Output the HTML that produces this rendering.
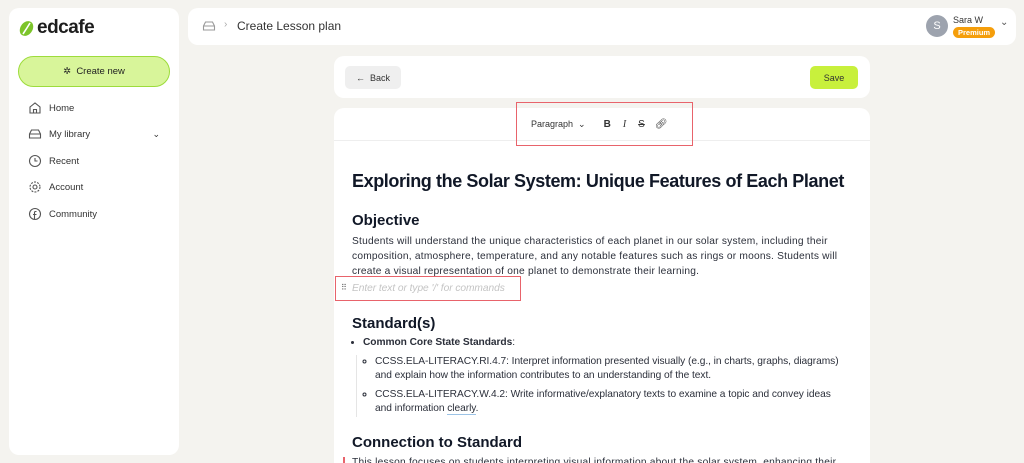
<!DOCTYPE html>
<html><head><style>
*{margin:0;padding:0;box-sizing:border-box}
html,body{width:1024px;height:463px;overflow:hidden}
body{background:#f4f3ef;font-family:"Liberation Sans",sans-serif;color:#1f2330;position:relative}
.card{position:absolute;background:#fff;border-radius:10px}
.nav{position:absolute;left:28px;display:flex;align-items:center;font-size:9.5px;color:#333}
.nav svg{width:14px;height:14px;margin-right:7px}
.ed p,.ed li{font-size:10.2px;line-height:14.6px;color:#2b2f3a;letter-spacing:-0.05px}
.abs{position:absolute}
h1,h2{color:#111827;white-space:nowrap}
</style></head><body>
<div class="card" style="left:9px;top:8px;width:170px;height:447px"></div>
<div class="abs" style="left:18px;top:17px;display:flex;align-items:center">
<svg width="17" height="17" viewBox="0 0 17 17"><ellipse cx="8.5" cy="8.5" rx="6" ry="8" transform="rotate(35 8.5 8.5)" fill="#7cc42a"/><path d="M5 14 Q9 8 12 3" stroke="#fff" stroke-width="1.6" fill="none"/></svg>
<span style="font-size:19px;font-weight:bold;margin-left:2px;letter-spacing:-0.5px;color:#1d1d1d">edcafe</span></div>
<div class="abs" style="left:18px;top:56px;width:152px;height:31px;border-radius:16px;background:#d8f59a;border:1.5px solid #9ddc3c;font-size:9.5px;display:flex;align-items:center;justify-content:center;color:#222">✲&nbsp;&nbsp;Create new</div>
<div class="nav" style="top:101px"><svg viewBox="0 0 14 14" fill="none" stroke="#555" stroke-width="1.1"><path d="M2 6 L7 2 L12 6 V12 H2Z M5.5 12V8.5H8.5V12"/></svg>Home</div>
<div class="nav" style="top:127px;width:132px"><svg viewBox="0 0 14 14" fill="none" stroke="#555" stroke-width="1.1"><path d="M1.5 7 L3.5 3H10.5L12.5 7V11H1.5Z M1.5 7H12.5"/></svg>My library<span style="margin-left:auto;font-size:9px">⌄</span></div>
<div class="nav" style="top:154px"><svg viewBox="0 0 14 14" fill="none" stroke="#555" stroke-width="1.1"><circle cx="7" cy="7" r="5.5"/><path d="M7 4V7H9.5"/></svg>Recent</div>
<div class="nav" style="top:180px"><svg viewBox="0 0 14 14" fill="none" stroke="#555" stroke-width="1.1"><circle cx="7" cy="7" r="2"/><circle cx="7" cy="7" r="5" stroke-dasharray="2 1.2"/></svg>Account</div>
<div class="nav" style="top:207px"><svg viewBox="0 0 14 14" fill="none" stroke="#555" stroke-width="1.1"><circle cx="7" cy="7" r="5.5"/><path d="M8.5 4.5H7.5Q6.5 4.5 6.5 5.5V12.5M5 7.5H8.5"/></svg>Community</div>

<div class="card" style="left:188px;top:8px;width:828px;height:37px"></div>
<svg class="abs" style="left:202px;top:19px" width="14" height="14" viewBox="0 0 14 14" fill="none" stroke="#999" stroke-width="1.1"><path d="M1.5 7 L3.5 3H10.5L12.5 7V11H1.5Z M1.5 7H12.5"/></svg>
<div class="abs" style="left:224px;top:19px;font-size:10px;color:#aaa">›</div>
<div class="abs" style="left:237px;top:19px;font-size:12px;color:#333">Create Lesson plan</div>
<div class="abs" style="left:926px;top:15px;width:22px;height:22px;border-radius:50%;background:#9da3ae;color:#fff;font-size:11px;text-align:center;line-height:22px">S</div>
<div class="abs" style="left:953px;top:15px;font-size:9px;color:#333">Sara W</div>
<div class="abs" style="left:953px;top:27px;background:#f59e0b;color:#fff;font-size:7.5px;font-weight:bold;border-radius:6px;padding:1px 5px">Premium</div>
<div class="abs" style="left:1000px;top:17px;font-size:10px;color:#555">⌄</div>

<div class="card" style="left:334px;top:56px;width:536px;height:42px"></div>
<div class="abs" style="left:345px;top:66px;width:56px;height:23px;background:#efefef;border-radius:5px;font-size:9px;display:flex;align-items:center;justify-content:center;color:#333">←&nbsp; Back</div>
<div class="abs" style="left:810px;top:66px;width:48px;height:23px;background:#c8f03c;border-radius:5px;font-size:9px;display:flex;align-items:center;justify-content:center;color:#333">Save</div>

<div class="card" style="left:334px;top:108px;width:536px;height:370px;border-radius:10px 10px 0 0"></div>
<div class="abs" style="left:334px;top:140px;width:536px;height:1px;background:#eee"></div>
<div class="abs" style="left:516px;top:102px;width:177px;height:44px;border:1.5px solid #e8636b"></div>
<div class="abs" style="left:531px;top:119px;font-size:9px;color:#333;display:flex;align-items:center"><span>Paragraph&nbsp;&nbsp;⌄</span><b style="margin-left:18px;font-size:10px">B</b><i style="margin-left:12px;font-size:10px;font-family:'Liberation Serif'">I</i><s style="margin-left:12px;font-size:10px">S</s><span style="margin-left:10px;font-size:10px">🔗︎</span></div>

<h1 class="abs" style="left:352px;top:171px;font-size:18px;letter-spacing:-0.4px">Exploring the Solar System: Unique Features of Each Planet</h1>
<h2 class="abs" style="left:352px;top:212px;font-size:15px">Objective</h2>
<div class="ed abs" style="left:352px;top:235px;width:520px">
<p style="letter-spacing:0.22px;line-height:14.8px">Students will understand the unique characteristics of each planet in our solar system, including their<br>composition, atmosphere, temperature, and any notable features such as rings or moons. Students will<br>create a visual representation of one planet to demonstrate their learning.</p>
<p style="margin-top:3px;color:#c4c4c4;font-style:italic">Enter text or type '/' for commands</p>
</div>
<h2 class="abs" style="left:352px;top:315px;font-size:15px">Standard(s)</h2>
<div class="ed abs" style="left:352px;top:336px;width:520px">
<ul style="padding-left:11px"><li style="list-style:disc"><b>Common Core State Standards</b>:</li></ul>
<ul style="margin-left:4px;padding-left:18px;border-left:1px solid #e5e5e5;margin-top:4px;list-style:circle">
<li>CCSS.ELA-LITERACY.RI.4.7: Interpret information presented visually (e.g., in charts, graphs, diagrams)<br>and explain how the information contributes to an understanding of the text.</li>
<li style="margin-top:4px">CCSS.ELA-LITERACY.W.4.2: Write informative/explanatory texts to examine a topic and convey ideas<br>and information <span style="border-bottom:1px solid #9cc3e6">clearly</span>.</li></ul>
</div>
<h2 class="abs" style="left:352px;top:434px;font-size:15px">Connection to Standard</h2>
<div class="ed abs" style="left:352px;top:456px;width:520px"><p style="letter-spacing:0.22px">This lesson focuses on students interpreting visual information about the solar system, enhancing their</p></div>
<div class="abs" style="left:335px;top:276px;width:186px;height:25px;border:1.5px solid #e8636b"></div>
<div class="abs" style="left:341px;top:283px;font-size:8px;color:#666">⠿</div>
<div class="abs" style="left:343px;top:457px;width:2px;height:8px;background:#e8636b"></div>
</body></html>
